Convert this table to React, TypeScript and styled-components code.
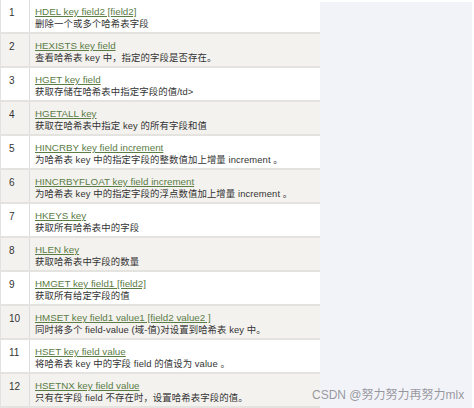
import styled, { createGlobalStyle } from "styled-components";

const GlobalStyle = createGlobalStyle`
  html, body {
    margin: 0;
    padding: 0;
    background: #ffffff;
  }
  body {
    font-family: "Liberation Sans", "Noto Sans CJK SC", Arial, sans-serif;
  }
`;

type Command = {
  syntax: string;
  desc: string;
};

const commands: Command[] = [
  { syntax: "HDEL key field2 [field2]", desc: "删除一个或多个哈希表字段" },
  { syntax: "HEXISTS key field", desc: "查看哈希表 key 中，指定的字段是否存在。" },
  { syntax: "HGET key field", desc: "获取存储在哈希表中指定字段的值/td>" },
  { syntax: "HGETALL key", desc: "获取在哈希表中指定 key 的所有字段和值" },
  {
    syntax: "HINCRBY key field increment",
    desc: "为哈希表 key 中的指定字段的整数值加上增量 increment 。",
  },
  {
    syntax: "HINCRBYFLOAT key field increment",
    desc: "为哈希表 key 中的指定字段的浮点数值加上增量 increment 。",
  },
  { syntax: "HKEYS key", desc: "获取所有哈希表中的字段" },
  { syntax: "HLEN key", desc: "获取哈希表中字段的数量" },
  { syntax: "HMGET key field1 [field2]", desc: "获取所有给定字段的值" },
  {
    syntax: "HMSET key field1 value1 [field2 value2 ]",
    desc: "同时将多个 field-value (域-值)对设置到哈希表 key 中。",
  },
  { syntax: "HSET key field value", desc: "将哈希表 key 中的字段 field 的值设为 value 。" },
  {
    syntax: "HSETNX key field value",
    desc: "只有在字段 field 不存在时，设置哈希表字段的值。",
  },
];

const Page = styled.div`
  position: relative;
  width: 474px;
  height: 408px;
  overflow: hidden;
  display: flex;
  background: #ffffff;
`;

const Table = styled.div`
  width: 320px;
  flex-shrink: 0;
  border-left: 1px solid #e2e2e2;
  box-sizing: border-box;
`;

const Row = styled.div<{ $shaded: boolean }>`
  height: 34px;
  box-sizing: border-box;
  display: grid;
  grid-template-columns: 29px 1fr;
  background: ${({ $shaded }) => ($shaded ? "#f3f2ef" : "#ffffff")};
  border-bottom: 2px solid #e4e3e0;
`;

const NumCell = styled.div`
  border-right: 1px solid #dddddd;
  padding: 7px 0 0 8px;
  font-size: 10px;
  line-height: 12px;
  color: #333333;
`;

const MainCell = styled.div`
  padding: 6px 0 0 5px;
  display: flex;
  flex-direction: column;
  white-space: nowrap;
`;

const Syntax = styled.a`
  font-size: 9.8px;
  line-height: 12px;
  color: #5b7c45;
  text-decoration: underline;
  width: fit-content;
`;

const Desc = styled.div`
  font-size: 9.4px;
  line-height: 12px;
  color: #333333;
  letter-spacing: 0.1px;
`;

const SidePanel = styled.div`
  width: 152px;
  margin-top: 2px;
  background: #f2f3f8;
`;

const Watermark = styled.div`
  position: absolute;
  left: 312px;
  top: 388px;
  font-size: 12px;
  line-height: 14px;
  color: rgba(120, 120, 128, 0.75);
  white-space: nowrap;
  font-family: "Liberation Sans", "Noto Sans CJK SC", sans-serif;
`;

export default function App() {
  return (
    <>
      <GlobalStyle />
      <Page>
        <Table>
          {commands.map((cmd, i) => (
            <Row key={cmd.syntax} $shaded={i % 2 === 1}>
              <NumCell>{i + 1}</NumCell>
              <MainCell>
                <Syntax href="#">{cmd.syntax}</Syntax>
                <Desc>{cmd.desc}</Desc>
              </MainCell>
            </Row>
          ))}
        </Table>
        <SidePanel />
        <Watermark>CSDN @努力努力再努力mlx</Watermark>
      </Page>
    </>
  );
}
